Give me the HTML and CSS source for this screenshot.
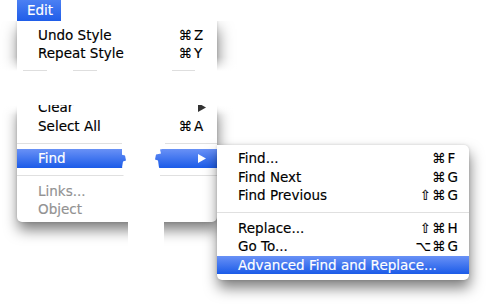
FILE: index.html
```html
<!DOCTYPE html>
<html>
<head>
<meta charset="utf-8">
<link rel="stylesheet" href="styles.css">
</head>
<body>
<div class="title">Edit</div>
<div class="menu frag-top">
  <div class="item"><span class="label">Undo Style</span><span class="sc"><span class="mods">⌘</span><span class="key">Z</span></span></div>
  <div class="item"><span class="label">Repeat Style</span><span class="sc"><span class="mods">⌘</span><span class="key">Y</span></span></div>
  <div class="sep-torn"></div>
</div>
<div class="lower">
  <div class="menu frag-bottom">
    <div class="inner">
      <div class="item"><span class="label">Clear</span><svg class="arrow" width="8" height="9" viewBox="0 0 8 9"><polygon points="0,0 8,4.5 0,9"/></svg></div>
      <div class="item"><span class="label">Select All</span><span class="sc"><span class="mods">⌘</span><span class="key">A</span></span></div>
      <div class="sep"></div>
      <div class="item hl"><span class="label">Find</span><svg class="arrow" width="8" height="9" viewBox="0 0 8 9"><polygon points="0,0 8,4.5 0,9"/></svg></div>
      <div class="sep"></div>
      <div class="item dis"><span class="label">Links...</span></div>
      <div class="item dis"><span class="label">Object</span></div>
    </div>
    <div class="tear"></div>
  </div>
  <div class="menu sub">
    <div class="item"><span class="label">Find...</span><span class="sc"><span class="mods">⌘</span><span class="key">F</span></span></div>
    <div class="item"><span class="label">Find Next</span><span class="sc"><span class="mods">⌘</span><span class="key">G</span></span></div>
    <div class="item"><span class="label">Find Previous</span><span class="sc"><span class="mods">⇧⌘</span><span class="key">G</span></span></div>
    <div class="sep"></div>
    <div class="item"><span class="label">Replace...</span><span class="sc"><span class="mods">⇧⌘</span><span class="key">H</span></span></div>
    <div class="item"><span class="label">Go To...</span><span class="sc"><span class="mods">⌥⌘</span><span class="key">G</span></span></div>
    <div class="item hl"><span class="label">Advanced Find and Replace...</span></div>
  </div>
</div>
</body>
</html>
```

FILE: styles.css
```css
html, body {
  margin: 0;
  padding: 0;
  background: #fff;
}
body {
  width: 487px;
  height: 308px;
  overflow: hidden;
  font-family: "DejaVu Sans", "Liberation Sans", sans-serif;
  font-size: 13.5px;
  color: #000;
  -webkit-text-stroke: 0.15px currentColor;
}
.title {
  margin-left: 17px;
  width: 44px;
  height: 21px;
  box-sizing: border-box;
  padding-left: 10px;
  line-height: 21px;
  color: #fff;
  background: linear-gradient(#4c80f3, #1f5de8);
}
.menu {
  position: relative;
  background: #fff;
  width: 200px;
  box-shadow: 1px 8px 14px rgba(0, 0, 0, 0.5), 0 0 3px rgba(0, 0, 0, 0.15);
}
.item {
  position: relative;
  z-index: 1;
  display: flex;
  align-items: center;
  height: 18.5px;
  line-height: 18.5px;
  padding: 0 12px 0 21px;
  white-space: nowrap;
}
.label {
  flex: 1;
}
.sc {
  display: flex;
}
.mods {
  letter-spacing: 1px;
}
.key {
  width: 12px;
  padding-left: 1px;
  box-sizing: border-box;
}
.arrow {
  fill: #333;
  margin-right: -1px;
}
.hl {
  color: #fff;
  background: linear-gradient(#6991f6, #1b5be8);
}
.hl .arrow {
  fill: #fff;
}
.dis {
  color: #929292;
}
.sep {
  height: 1px;
  margin: 7.5px 0 5.5px;
  background: #e0e0e0;
}

/* top torn fragment */
.frag-top {
  margin-left: 17px;
  padding-top: 4.5px;
  clip-path: inset(0 -20px 0 -20px);
}
.frag-top::after {
  content: "";
  position: absolute;
  left: -20px;
  right: -20px;
  bottom: 0;
  height: 14px;
  background: linear-gradient(rgba(255, 255, 255, 0), #fff);
}
.sep-torn {
  position: relative;
  z-index: 1;
  height: 1px;
  margin: 7.5px 0 1.5px;
  background: linear-gradient(to right,
    transparent 6px, #dedede 6px, #dedede 30px,
    transparent 30px, transparent 56px, #dedede 56px, #dedede 80px,
    transparent 80px, transparent 155px, #dedede 155px, #dedede 178px,
    transparent 178px);
}

/* lower part */
.lower {
  display: flex;
  align-items: flex-start;
  margin-top: 34px;
}
.frag-bottom {
  margin-left: 17px;
  padding-bottom: 3.5px;
  border-radius: 0 0 5px 5px;
  clip-path: inset(0 -20px -40px -20px);
}
.frag-bottom::before {
  content: "";
  position: absolute;
  left: -20px;
  right: -20px;
  top: 0;
  height: 10px;
  background: linear-gradient(#fff, rgba(255, 255, 255, 0));
}
.inner {
  margin-top: -7px;
}
.tear {
  position: absolute;
  z-index: 2;
  left: 105px;
  top: 37.5px;
  width: 44px;
  height: 120px;
  background: #fff;
  clip-path: polygon(
    0 0, 43px 0, 43px 6px, 38px 7px, 39px 11px, 34px 12px, 33px 17px,
    36px 18px, 37px 25px, 38px 26px, 38px 40px, 42px 79px, 42px 120px,
    6px 120px, 6px 79px, 2px 40px, 1px 26px, 0 25px, 1px 19px,
    4px 18px, 3px 13px, -1px 12px, -1px 7px, 0 6px);
}

/* submenu */
.sub {
  z-index: 3;
  width: 252px;
  margin-top: 40.2px;
  padding: 4px 0 5.5px;
  border-radius: 0 5px 5px 5px;
}
.sub .item {
  padding-right: 10.5px;
}
```
